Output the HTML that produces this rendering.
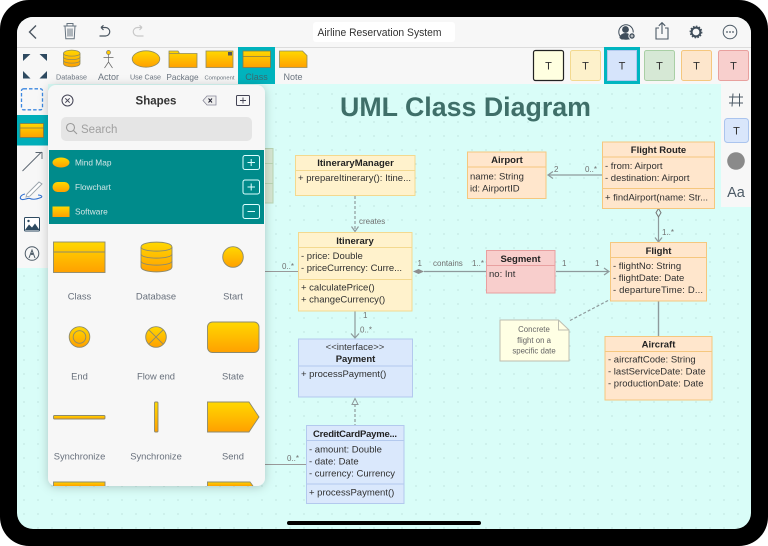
<!DOCTYPE html>
<html><head><meta charset="utf-8"><style>
html,body{margin:0;padding:0;background:#fff;width:768px;height:546px;overflow:hidden}
svg{display:block;filter:blur(.35px)}
text{font-family:"Liberation Sans",sans-serif;fill:#333}
.b{font-weight:bold;font-size:9.5px;text-anchor:middle;fill:#222}
.t{font-size:9.5px;fill:#303030}
.l{font-size:8px;fill:#707070}
.s{font-size:9.4px;fill:#68707c;text-anchor:middle}
.m{font-size:8.3px;fill:#d3e6e6}
.tb{fill:#6b7580;text-anchor:middle}
.sw{font-size:11px;text-anchor:middle;fill:#333}
</style></head><body>
<svg width="768" height="546" viewBox="0 0 768 546" xmlns="http://www.w3.org/2000/svg">
<defs>
<linearGradient id="g" x1="0" y1="0" x2="0" y2="1"><stop offset="0" stop-color="#ffd800"/><stop offset="1" stop-color="#ffa000"/></linearGradient>
<pattern id="dots" x="9.5" y="9.5" width="14" height="14" patternUnits="userSpaceOnUse"><rect width="1" height="1" fill="#a9cdc8"/></pattern>
<clipPath id="scr"><rect x="17" y="17" width="734" height="512" rx="16"/></clipPath>
<filter id="sh" x="-20%" y="-20%" width="140%" height="140%"><feDropShadow dx="0" dy="1" stdDeviation="5" flood-color="#000" flood-opacity=".22"/></filter>
</defs>
<rect x="0" y="0" width="768" height="546" rx="29" fill="#000"/>
<g clip-path="url(#scr)">
<rect x="17" y="17" width="734" height="512" fill="#d9fdf8"/>
<rect x="17" y="84" width="734" height="445" fill="url(#dots)"/>
<rect x="17" y="17" width="734" height="67" fill="#f7f7f7"/>
<rect x="17" y="47" width="734" height="1" fill="#dcdcdc"/>
<rect x="17" y="84" width="31" height="184" fill="#f7f7f7"/>
<rect x="721" y="84" width="30" height="123" fill="#f7f7f7"/>
</g>

<!-- top bar -->
<path d="M36 25.500 29.500 32 36 38.500" fill="none" stroke="#4a5560" stroke-width="1.400"/>
<g fill="none" stroke="#66737f" stroke-width="1"><path d="M63.500 26h13M67 26v-2.500h6V26M65 26l.8 12.800h8.400l.8-12.800M68 28.500v8M70 28.500v8M72 28.500v8"/></g>
<path d="M101 27.500h4.500a4 4 0 0 1 0 8.500H99.500M101 27.500l2.500-2.200M101 27.500l2.500 2.400" fill="none" stroke="#4a5560" stroke-width="1.200"/>
<path d="M142 27.500h-4.500a4 4 0 0 0 0 8.500h6M142 27.500l-2.500-2.200M142 27.500l-2.500 2.400" fill="none" stroke="#c8c8c8" stroke-width="1.200"/>
<rect x="313" y="22" width="142" height="20" rx="3" fill="#fff"/>
<text x="317.500" y="36" font-size="10.800" fill="#333" textLength="124" lengthAdjust="spacingAndGlyphs">Airline Reservation System</text>
<circle cx="626" cy="32" r="7.200" fill="none" stroke="#3f4d5a" stroke-width="1"/>
<circle cx="625.500" cy="29.500" r="3.400" fill="#3f4d5a"/><path d="M619.500 38a6 5 0 0 1 12 0l-2 1.500h-8z" fill="#3f4d5a"/>
<circle cx="632" cy="36" r="3.200" fill="#3f4d5a" stroke="#f7f7f7"/><path d="M630.500 36h3M632 34.500v3" stroke="#fff" stroke-width=".8"/>
<path d="M659 28h-3v11h12V28h-3M662 34V23M658.800 25.800 662 22.700l3.200 3.100" fill="none" stroke="#4c5a66" stroke-width="1.100"/>
<circle cx="696" cy="32" r="4.400" fill="none" stroke="#3f4d5a" stroke-width="2"/>
<circle cx="696" cy="32" r="5.800" fill="none" stroke="#3f4d5a" stroke-width="1.200" stroke-dasharray="1.600 1.400"/>
<circle cx="730" cy="32" r="6.800" fill="none" stroke="#4c5a66" stroke-width="1"/>
<circle cx="727" cy="32" r=".9" fill="#4c5a66"/><circle cx="730" cy="32" r=".9" fill="#4c5a66"/><circle cx="733" cy="32" r=".9" fill="#4c5a66"/>

<!-- expand -->
<g fill="#2e4a60"><path d="M23 54h7.500L23 61z"/><path d="M47 54h-7.500L47 61z"/><path d="M23 78.500h7.500L23 71z"/><path d="M47 78.500h-7.500L47 71z"/></g>

<!-- toolbar shapes -->
<g stroke="#8f8a60" stroke-width=".8" fill="url(#g)">
<path d="M63.500 53.500c0-4.500 16.500-4.500 16.500 0v10c0 4.500-16.500 4.500-16.500 0z"/>
<path d="M63.500 53.500c0 3.500 16.500 3.500 16.500 0M63.500 57c0 3.500 16.500 3.500 16.500 0M63.500 60.500c0 3.500 16.500 3.500 16.500 0" fill="none"/>
<ellipse cx="146" cy="59" rx="13.800" ry="8.200"/>
<path d="M169 51h9l1.500 2.500H197V67.500H169z"/><path d="M169 53.500h10" fill="none"/>
<rect x="206" y="51" width="27" height="16.500"/>
<path d="M279.500 51h23l4.500 4.500v12h-27.500z"/>
</g>
<rect x="228" y="52" width="4" height="3.500" fill="#555"/>
<rect x="238" y="47" width="37" height="37" fill="#00b3bd"/>
<rect x="243" y="51" width="27.500" height="16.500" fill="url(#g)" stroke="#7f7a50" stroke-width=".8"/><path d="M243 56.500h27.500" stroke="#7f7a50" stroke-width=".8"/>
<circle cx="108.500" cy="52.500" r="2" fill="#ffc800" stroke="#777" stroke-width=".7"/>
<path d="M108.500 54.500v7.500M103.500 57.500h10M108.500 62l-4 6M108.500 62l4 6" fill="none" stroke="#666" stroke-width=".7"/>
<text class="tb" x="71.500" y="79.500" font-size="7.200" textLength="31">Database</text>
<text class="tb" x="108.500" y="80" font-size="9">Actor</text>
<text class="tb" x="145.500" y="79.500" font-size="7.200" textLength="31">Use Case</text>
<text class="tb" x="182.500" y="80" font-size="8.300">Package</text>
<text class="tb" x="219.500" y="79.500" font-size="5.800">Component</text>
<text class="tb" x="256.500" y="80" font-size="9" style="fill:#3a6a70">Class</text>
<text class="tb" x="293" y="80" font-size="9">Note</text>

<!-- swatches -->
<rect x="533.500" y="50.500" width="30" height="30" rx="2" fill="#ffffe0" stroke="#222" stroke-width="1.200"/>
<rect x="570.500" y="50.500" width="30" height="30" rx="2" fill="#fdf1cb" stroke="#f3d98f"/>
<rect x="604" y="47" width="36" height="37" fill="#00b5c0"/>
<rect x="607.500" y="50.500" width="29" height="30" fill="#d6e4fb" stroke="#b3c9ee"/>
<rect x="644.500" y="50.500" width="30" height="30" rx="2" fill="#d6e8d5" stroke="#a9cfa5"/>
<rect x="681.500" y="50.500" width="30" height="30" rx="2" fill="#fde6cc" stroke="#f5c77e"/>
<rect x="718.500" y="50.500" width="30" height="30" rx="2" fill="#f8cfcd" stroke="#e8a09e"/>
<text class="sw" x="548.500" y="69.500">T</text><text class="sw" x="585.500" y="69.500">T</text><text class="sw" x="622" y="69.500">T</text><text class="sw" x="659.500" y="69.500">T</text><text class="sw" x="696.500" y="69.500">T</text><text class="sw" x="733.500" y="69.500">T</text>

<!-- right panel -->
<path d="M733 93.500l-1 13M739.500 93.500v13M729 97h14M729 103h14" stroke="#4c5a66" stroke-width="1" fill="none"/>
<rect x="724.500" y="118.500" width="24" height="24" rx="3" fill="#d9e6fb" stroke="#aac4ee"/>
<text class="sw" x="736.500" y="134.500">T</text>
<circle cx="736" cy="161" r="8.800" fill="#8a8a8a"/>
<text x="736" y="197" font-size="14.500" text-anchor="middle" style="fill:#4c5a66">Aa</text>

<!-- left tools -->
<rect x="21.500" y="88.800" width="21" height="21" rx="2" fill="none" stroke="#3b87e0" stroke-width="1.300" stroke-dasharray="3.500 2"/>
<rect x="17" y="115" width="31" height="30.500" fill="#00aeb9"/>
<rect x="20" y="123.500" width="23.500" height="14" fill="url(#g)" stroke="#7f7a50" stroke-width=".8"/><path d="M20 128h23.500" stroke="#7f7a50" stroke-width=".8"/>
<path d="M22.500 171 41.500 152M35.500 152.500h6.500v6.500" fill="none" stroke="#5a6570" stroke-width=".9"/>
<path d="M27 194l12-12 3 2-12 12-4 1z" fill="#fff" stroke="#9aa3ab" stroke-width=".9"/>
<path d="M25 194c-5 1-6 5-3 5.500s6-2 8-1 6 1 11-1c2-1 0-2.500-3-2.500" fill="none" stroke="#2f6fd0" stroke-width="1.100"/>
<rect x="24.500" y="217.500" width="15" height="13.500" rx="1" fill="#fff" stroke="#2e4a60" stroke-width="1"/>
<path d="M25 230l4-5.500 3 3 3-4 4.500 6.500z" fill="#2e4a60"/><circle cx="28.500" cy="221" r="1.200" fill="#2e4a60"/>
<circle cx="32" cy="253.500" r="6.800" fill="none" stroke="#4c5a66" stroke-width="1"/>
<path d="M29 258l3-8 3 8" fill="none" stroke="#4c5a66" stroke-width="1"/><circle cx="32" cy="254" r="1.100" fill="#4c5a66"/>

<!-- title -->
<text x="340" y="116" font-size="27" font-weight="bold" style="fill:#3f6f69" textLength="251" lengthAdjust="spacingAndGlyphs">UML Class Diagram</text>

<!-- behind-panel pieces -->
<rect x="255" y="148.500" width="18" height="54.500" fill="#d6e6d2" stroke="#b9d4b3"/>
<path d="M255 163.500h18M255 183.500h18" stroke="#b9d4b3"/>
<path d="M255 271.500h43M255 464.500h51" stroke="#999" stroke-width=".9"/>

<!-- connectors -->
<g fill="none" stroke="#8e9a9c" stroke-width="1.200">
<path d="M355 196v34" stroke-dasharray="3 2"/>
<path d="M351.500 226.500l3.500 5 3.500-5"/>
<path d="M355 311v27M351 333.500l4 4.500 4-4.500"/>
<path d="M355 404v22" stroke-dasharray="3 2"/>
<path d="M424 271.500h62"/>
<path d="M556 271.500h53M604 268l5 3.500-5 3.500"/>
<path d="M548 175h54M553 171.500l-5 3.500 5 3.500"/>
<path d="M658.500 217v25M655 237.500l3.500 4.500 3.500-4.500"/>
<path d="M658.500 301v35" stroke-width="1.400"/>
<path d="M570 320.500l40-21" stroke-dasharray="3 2"/>
</g>
<path d="M355 398.500l3 6h-6z" fill="#d9fdf8" stroke="#8e9a9c"/>
<path d="M413 271.500l5.500-2.500 5.500 2.500-5.500 2.500z" fill="#8e8e8e"/>
<path d="M658.500 208.500l2.500 4.200-2.500 4.200-2.500-4.200z" fill="#d9fdf8" stroke="#777"/>
<text class="l" x="282" y="269">0..*</text>
<text class="l" x="287" y="461">0..*</text>
<text class="l" x="359" y="224">creates</text>
<text class="l" x="417.500" y="266">1</text>
<text class="l" x="433" y="266">contains</text>
<text class="l" x="472" y="266">1..*</text>
<text class="l" x="363" y="318">1</text>
<text class="l" x="360" y="332.500">0..*</text>
<text class="l" x="562" y="266">1</text>
<text class="l" x="595" y="266">1</text>
<text class="l" x="554" y="172">2</text>
<text class="l" x="585" y="172">0..*</text>
<text class="l" x="662" y="235">1..*</text>

<!-- ItineraryManager -->
<rect x="295.500" y="155.500" width="119.500" height="40" fill="#fff2cc" stroke="#f3d98f"/>
<path d="M295.500 170.500H415" stroke="#f3d98f"/>
<text class="b" x="355.500" y="166">ItineraryManager</text>
<text class="t" x="298" y="181" textLength="113">+ prepareItinerary(): Itine...</text>

<!-- Itinerary -->
<rect x="298.500" y="232.500" width="113.500" height="78.500" fill="#fff2cc" stroke="#f3d98f"/>
<path d="M298.500 247.500H412M298.500 279.500H412" stroke="#f3d98f"/>
<text class="b" x="355" y="244">Itinerary</text>
<text class="t" x="301" y="259">- price: Double</text>
<text class="t" x="301" y="271" textLength="101">- priceCurrency: Curre...</text>
<text class="t" x="301" y="290.500">+ calculatePrice()</text>
<text class="t" x="301" y="302.500">+ changeCurrency()</text>

<!-- Payment -->
<rect x="298.500" y="339" width="114" height="58" fill="#dae8fc" stroke="#b3c9ee"/>
<path d="M298.500 366H412.500" stroke="#b3c9ee"/>
<text x="355" y="350" font-size="9.500" text-anchor="middle" style="fill:#3a3a3a">&lt;&lt;interface&gt;&gt;</text>
<text class="b" x="355.500" y="362">Payment</text>
<text class="t" x="301" y="377">+ processPayment()</text>

<!-- CreditCard -->
<rect x="306.500" y="425.500" width="97.500" height="78" fill="#dae8fc" stroke="#b3c9ee"/>
<path d="M306.500 440.500H404M306.500 484H404" stroke="#b3c9ee"/>
<text class="b" x="355" y="437" textLength="84">CreditCardPayme...</text>
<text class="t" x="309" y="452.500">- amount: Double</text>
<text class="t" x="309" y="464.500">- date: Date</text>
<text class="t" x="309" y="476.500">- currency: Currency</text>
<text class="t" x="309" y="495.500">+ processPayment()</text>

<!-- Segment -->
<rect x="486.500" y="250.500" width="68.500" height="42.500" fill="#f8cecc" stroke="#e8a0a0"/>
<path d="M486.500 265.500H555" stroke="#e8a0a0"/>
<text class="b" x="520.500" y="262">Segment</text>
<text class="t" x="489" y="277">no: Int</text>

<!-- Airport -->
<rect x="467.500" y="152" width="78.500" height="46.500" fill="#ffe6cc" stroke="#f5c77e"/>
<path d="M467.500 167H546" stroke="#f5c77e"/>
<text class="b" x="507" y="163">Airport</text>
<text class="t" x="470" y="179.500">name: String</text>
<text class="t" x="470" y="191.500">id: AirportID</text>

<!-- Flight Route -->
<rect x="602.500" y="142" width="112" height="66.500" fill="#ffe6cc" stroke="#f5c77e"/>
<path d="M602.500 157H714.500M602.500 188.500H714.500" stroke="#f5c77e"/>
<text class="b" x="658.500" y="153">Flight Route</text>
<text class="t" x="605" y="169">- from: Airport</text>
<text class="t" x="605" y="181">- destination: Airport</text>
<text class="t" x="605" y="200.500" textLength="103">+ findAirport(name: Str...</text>

<!-- Flight -->
<rect x="610.500" y="242.500" width="96" height="58.500" fill="#ffe6cc" stroke="#f5c77e"/>
<path d="M610.500 257.500H706.500" stroke="#f5c77e"/>
<text class="b" x="658.500" y="254">Flight</text>
<text class="t" x="613" y="269">- flightNo: String</text>
<text class="t" x="613" y="281">- flightDate: Date</text>
<text class="t" x="613" y="293" textLength="90">- departureTime: D...</text>

<!-- Aircraft -->
<rect x="605" y="336.500" width="107" height="63.500" fill="#ffe6cc" stroke="#f5c77e"/>
<path d="M605 351.500H712" stroke="#f5c77e"/>
<text class="b" x="658.500" y="347.500">Aircraft</text>
<text class="t" x="608" y="362.500">- aircraftCode: String</text>
<text class="t" x="608" y="374.500">- lastServiceDate: Date</text>
<text class="t" x="608" y="386.500">- productionDate: Date</text>

<!-- Note -->
<path d="M500 320h58.500l10.500 10v31h-69z" fill="#ffffe4" stroke="#bdbdb0"/>
<path d="M558.500 320v10H569" fill="none" stroke="#bdbdb0"/>
<text x="534" y="332" font-size="7.800" text-anchor="middle" style="fill:#666">Concrete</text>
<text x="534" y="343" font-size="7.800" text-anchor="middle" style="fill:#666">flight on a</text>
<text x="534" y="353.500" font-size="7.800" text-anchor="middle" style="fill:#666">specific date</text>

<!-- Home indicator -->
<rect x="287" y="521" width="194" height="4" rx="2" fill="#000"/>

<!-- Shapes panel -->
<rect x="48" y="85" width="217" height="401" rx="8" fill="#f7f7f7" filter="url(#sh)"/>
<circle cx="67.500" cy="100.500" r="5.500" fill="none" stroke="#445" stroke-width="1"/>
<path d="M65.300 98.300l4.400 4.400M69.700 98.300l-4.400 4.400" stroke="#445" stroke-width="1"/>
<text x="156" y="104.500" font-size="11.500" font-weight="bold" text-anchor="middle" style="fill:#333">Shapes</text>
<path d="M203 100.500l4-4.500h9v9h-9z" fill="#eee" stroke="#889" stroke-width=".8"/>
<path d="M208.500 98.500l3.500 4M212 98.500l-3.500 4" stroke="#223" stroke-width="1"/>
<rect x="236.500" y="95.500" width="13" height="10" rx="1" fill="none" stroke="#445" stroke-width="1"/>
<path d="M240 100.500h6M243 97.500v6" stroke="#445" stroke-width=".9"/>
<rect x="61" y="117" width="191" height="24" rx="5" fill="#e5e5e5"/>
<circle cx="70.500" cy="127.500" r="4" fill="none" stroke="#999" stroke-width="1.100"/><path d="M73.500 130.500l3.500 3.500" stroke="#999" stroke-width="1.100"/>
<text x="81" y="133" font-size="11.500" style="fill:#a0a0a0">Search</text>

<rect x="49" y="150" width="215" height="74" fill="#008b8b"/>
<ellipse cx="61" cy="162.500" rx="8.500" ry="5" fill="url(#g)"/>
<rect x="52.500" y="182" width="17" height="10" rx="5" fill="url(#g)"/>
<rect x="52.500" y="206.500" width="17" height="10.500" fill="url(#g)"/>
<text class="m" x="75" y="165.500">Mind Map</text>
<text class="m" x="75" y="190">Flowchart</text>
<text class="m" x="75" y="214.500">Software</text>
<g fill="none" stroke="#dff" stroke-width="1">
<rect x="243" y="155.500" width="16.500" height="14" rx="2"/><path d="M247.500 162.500h7.500M251.200 159v7"/>
<rect x="243" y="180" width="16.500" height="14" rx="2"/><path d="M247.500 187h7.500M251.200 183.500v7"/>
<rect x="243" y="204.500" width="16.500" height="14" rx="2"/><path d="M247.500 211.500h7.500"/>
</g>

<g stroke="#8c8a6e" stroke-width=".9" fill="url(#g)">
<rect x="53.500" y="242" width="51.500" height="30.500"/><path d="M53.500 252H105" fill="none"/>
<path d="M141 247c0-6.500 31-6.500 31 0v20c0 6.500-31 6.500-31 0z"/>
<path d="M141 247c0 5.500 31 5.500 31 0M141 254c0 5.500 31 5.500 31 0M141 261c0 5.500 31 5.500 31 0" fill="none"/>
<circle cx="233" cy="257" r="10.300"/>
<circle cx="79.500" cy="337" r="10.300"/><circle cx="79.500" cy="337" r="6.300" fill="none"/>
<circle cx="156" cy="337" r="10.300"/><path d="M148.800 329.800l14.400 14.400M163.200 329.800l-14.400 14.400" fill="none"/>
<rect x="207.500" y="322" width="51.500" height="30.500" rx="5"/>
<rect x="53.500" y="415.500" width="51.500" height="3.500" rx="1"/>
<rect x="154.500" y="402" width="3.500" height="30" rx="1"/>
<path d="M207.500 402H249l10 15-10 15H207.500z"/>
<path d="M53.500 486v-4H105v4"/>
<path d="M207.500 486v-4H250l3 4"/>
</g>
<text class="s" x="79.500" y="299.500">Class</text><text class="s" x="156" y="299.500">Database</text><text class="s" x="233" y="299.500">Start</text>
<text class="s" x="79.500" y="379.500">End</text><text class="s" x="156" y="379.500">Flow end</text><text class="s" x="233" y="379.500">State</text>
<text class="s" x="79.500" y="459.500">Synchronize</text><text class="s" x="156" y="459.500">Synchronize</text><text class="s" x="233" y="459.500">Send</text>
</svg>
</body></html>
